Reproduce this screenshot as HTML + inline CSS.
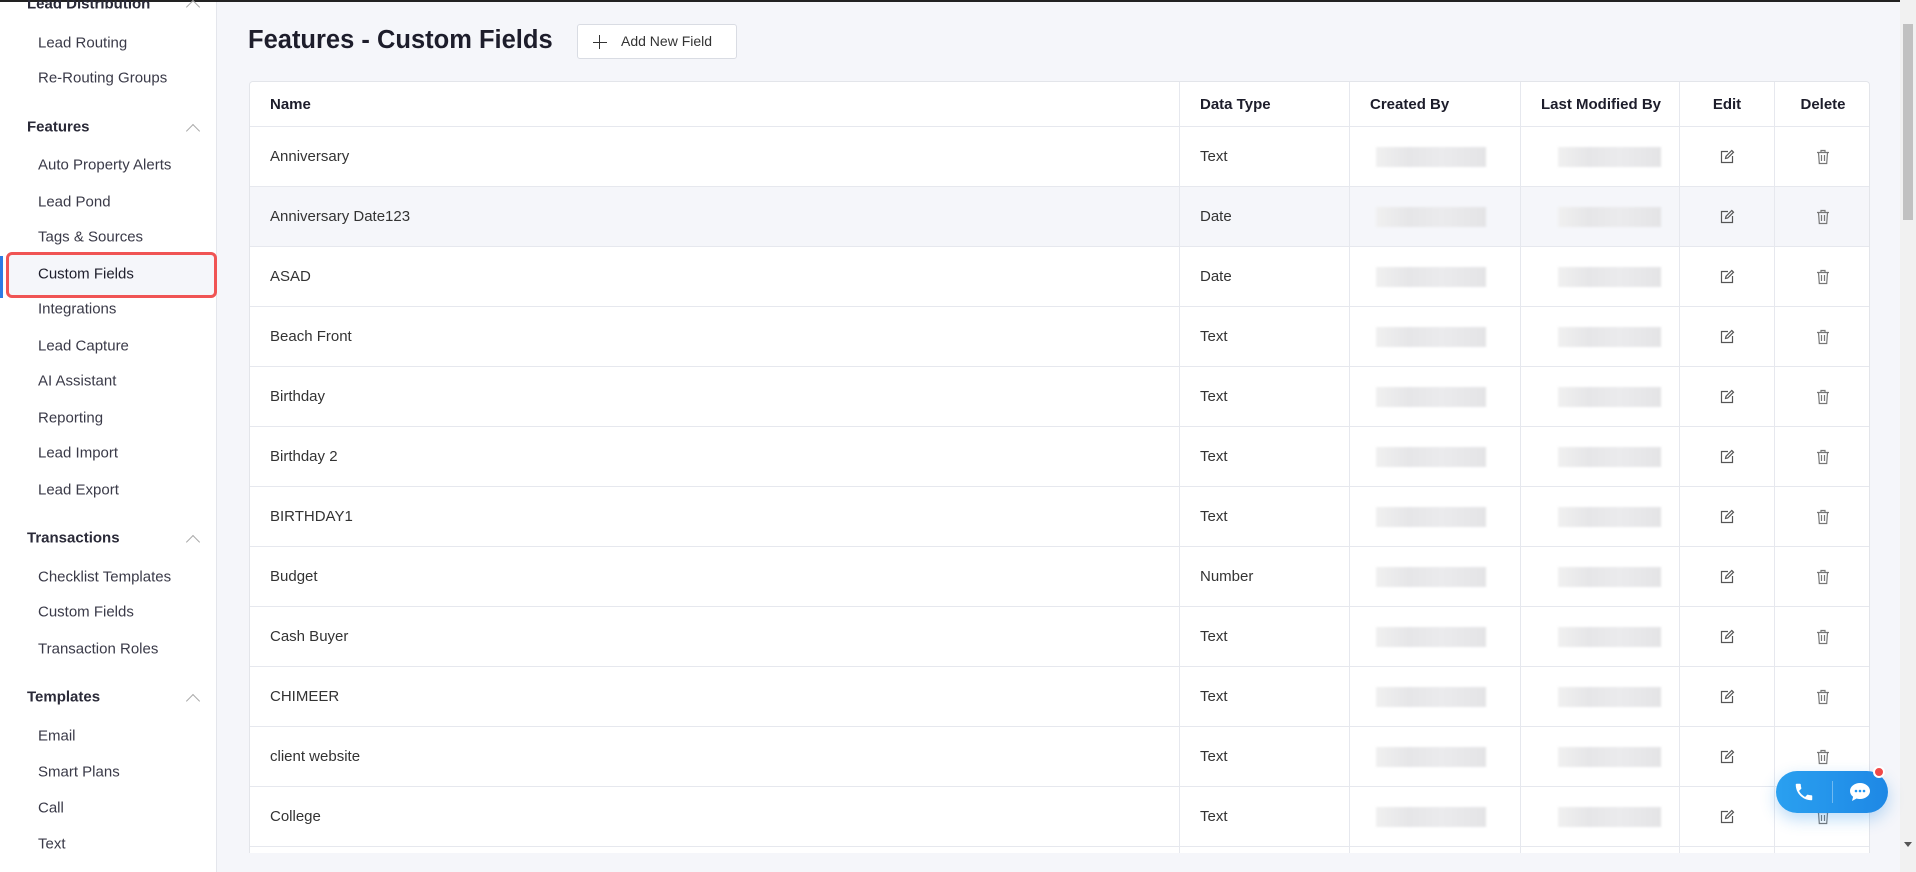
<!DOCTYPE html><html><head><style>
*{box-sizing:border-box;margin:0;padding:0}
body{width:1916px;height:872px;overflow:hidden;background:#f5f6fa;font-family:"Liberation Sans",sans-serif;position:relative;color:#333}
.top{position:absolute;left:0;top:0;width:1916px;height:2px;background:#222}
.side{position:absolute;left:0;top:2px;width:217px;height:870px;background:#fff;border-right:1px solid #e4e6ec}
.s{position:absolute;font-size:15px;color:#3a3a48;white-space:nowrap;transform:translateY(-50%)}
.h{left:27px;font-weight:bold;color:#2a2a38}
.i{left:38px}
.chev{position:absolute;left:188px;width:10px;height:10px;border-left:1.3px solid #aaa;border-top:1.3px solid #aaa;transform:rotate(45deg)}
.hl{position:absolute;left:6px;top:250px;width:211px;height:46px;border:3px solid #f05454;border-radius:6px;background:#f5f6fa}
.bar{position:absolute;left:0;top:254px;width:3px;height:42px;background:#2d7be5}
h1{position:absolute;left:248px;top:26px;font-size:25.5px;font-weight:bold;color:#1d1d2b}
.btn{position:absolute;left:577px;top:24px;width:160px;height:35px;background:#fff;border:1px solid #d9dce3;border-radius:3px;font-size:14px;color:#333;line-height:33px;padding-left:43px}
.btn:before{content:"";position:absolute;left:21px;top:10px;width:1.3px;height:14px;background:#333}
.btn:after{content:"";position:absolute;left:14.5px;top:16.5px;width:14px;height:1.3px;background:#333}
.tbl{position:absolute;left:249px;top:81px;width:1621px;height:772px;background:#fff;border:1px solid #e3e5ea;border-bottom:none;border-radius:4px 4px 0 0;overflow:hidden}
.row{position:absolute;left:0;width:1621px;height:60px;border-bottom:1px solid #e6e8ee}
.c{position:absolute;top:0;height:100%;border-right:1px solid #e6e8ee;font-size:15px;display:flex;align-items:center}
.hd .c{font-weight:bold;color:#1d1d2b;font-size:15px}
.blur{position:absolute;height:20px;background:linear-gradient(90deg,#f0f0f0,#e6e6e8 30%,#ebebed 60%,#e4e4e6);filter:blur(1px)}
.sb{position:absolute;left:1900px;top:0;width:16px;height:872px;background:#f1f1f1}
.th{position:absolute;left:1903px;top:24px;width:10px;height:196px;background:#c1c1c1}
.fab{position:absolute;left:1776px;top:771px;width:112px;height:42px;border-radius:21px;background:linear-gradient(90deg,#2aa0f0,#1e88e5);box-shadow:0 6px 16px rgba(30,136,229,.3)}
.dot{position:absolute;left:1873px;top:766px;width:12px;height:12px;border-radius:50%;background:#f04848;border:2px solid #fff}
</style></head><body>
<div class="top"></div>
<div class="side">
<div class="hl"></div><div class="bar"></div>
<div class="s h" style="top:2px">Lead Distribution</div><div class="chev" style="top:0px"></div>
<div class="s i" style="top:41px">Lead Routing</div>
<div class="s i" style="top:76px">Re-Routing Groups</div>
<div class="s h" style="top:125px">Features</div><div class="chev" style="top:124px"></div>
<div class="s i" style="top:163px">Auto Property Alerts</div>
<div class="s i" style="top:200px">Lead Pond</div>
<div class="s i" style="top:235px">Tags &amp; Sources</div>
<div class="s i" style="top:272px;color:#1d1d2b">Custom Fields</div>
<div class="s i" style="top:307px">Integrations</div>
<div class="s i" style="top:344px">Lead Capture</div>
<div class="s i" style="top:379px">AI Assistant</div>
<div class="s i" style="top:416px">Reporting</div>
<div class="s i" style="top:451px">Lead Import</div>
<div class="s i" style="top:488px">Lead Export</div>
<div class="s h" style="top:536px">Transactions</div><div class="chev" style="top:535px"></div>
<div class="s i" style="top:575px">Checklist Templates</div>
<div class="s i" style="top:610px">Custom Fields</div>
<div class="s i" style="top:647px">Transaction Roles</div>
<div class="s h" style="top:695px">Templates</div><div class="chev" style="top:694px"></div>
<div class="s i" style="top:734px">Email</div>
<div class="s i" style="top:770px">Smart Plans</div>
<div class="s i" style="top:806px">Call</div>
<div class="s i" style="top:842px">Text</div>
</div>
<h1>Features - Custom Fields</h1>
<div class="btn">Add New Field</div>
<div class="tbl" id="t"></div>
<div class="sb"></div><div class="th"></div>
<svg style="position:absolute;left:1904px;top:842px" width="8" height="6"><path d="M0 0h8L4 5z" fill="#555"/></svg>
<div class="fab">
<svg style="position:absolute;left:17px;top:10px" width="22" height="22" viewBox="0 0 24 24"><path d="M6.6 10.8c1.4 2.8 3.8 5.1 6.6 6.6l2.2-2.2c.3-.3.7-.4 1-.2 1.1.4 2.3.6 3.6.6.6 0 1 .4 1 1V20c0 .6-.4 1-1 1C10.6 21 3 13.4 3 4c0-.6.4-1 1-1h3.5c.6 0 1 .4 1 1 0 1.3.2 2.5.6 3.6.1.3 0 .7-.2 1z" fill="#fff"/></svg>
<div style="position:absolute;left:56px;top:10px;width:1px;height:22px;background:rgba(255,255,255,.35)"></div>
<svg style="position:absolute;left:72px;top:9px" width="24" height="24" viewBox="0 0 24 24"><path d="M12 3C6.5 3 2 6.6 2 11c0 2.3 1.2 4.3 3.1 5.8L4 21l4.6-2.5c1 .3 2.2.5 3.4.5 5.5 0 10-3.6 10-8s-4.5-8-10-8z" fill="#fff"/><circle cx="8" cy="11" r="1.3" fill="#2196f3"/><circle cx="12" cy="11" r="1.3" fill="#2196f3"/><circle cx="16" cy="11" r="1.3" fill="#2196f3"/></svg>
</div>
<div class="dot"></div>
<script>
var cols=[[0,930,'Name',20,'l'],[930,170,'Data Type',20,'l'],[1100,171,'Created By',20,'l'],[1271,159,'Last Modified By',20,'l'],[1430,95,'Edit',0,'c'],[1525,96,'Delete',0,'c']];
var rows=[['Anniversary','Text'],['Anniversary Date123','Date'],['ASAD','Date'],['Beach Front','Text'],['Birthday','Text'],['Birthday 2','Text'],['BIRTHDAY1','Text'],['Budget','Number'],['Cash Buyer','Text'],['CHIMEER','Text'],['client website','Text'],['College','Text'],['','']];
var edit='<svg width="16" height="16" viewBox="0 0 16 16" fill="none" stroke="#555" stroke-width="1.2"><path d="M9 2.5H2.5v11h11V7"/><path d="M6.5 9.5l.5-2.2L12.8 1.5l1.7 1.7L8.7 9z"/></svg>';
var del='<svg width="14" height="16" viewBox="0 0 14 16" fill="none" stroke="#777" stroke-width="1.2"><path d="M1 3.5h12M5 3.5V1.5h4v2M2.5 3.5l.8 11h7.4l.8-11M5.5 6v6M8.5 6v6"/></svg>';
var h='';
function row(top,cells,hd,bg){var s='<div class="row'+(hd?' hd':'')+'" style="top:'+top+'px;height:'+(hd?45:60)+'px;background:'+(bg||'#fff')+'">';
cols.forEach(function(c,i){s+='<div class="c" style="left:'+c[0]+'px;width:'+c[1]+'px;padding-left:'+c[3]+'px;justify-content:'+(c[4]=='c'?'center':'flex-start')+';'+(i==5?'border-right:none':'')+'">'+cells[i]+'</div>';});return s+'</div>';}
h+=row(0,cols.map(function(c){return c[2]}),1);
rows.forEach(function(r,k){var t=45+k*60;h+=row(t,[r[0],r[1],'','',edit,del],0,k==1?'#f5f6fa':'#fff');
h+='<div class="blur" style="left:1126px;width:110px;top:'+(t+20)+'px"></div><div class="blur" style="left:1308px;width:103px;top:'+(t+20)+'px"></div>';});
document.getElementById('t').innerHTML=h;
</script>
</body></html>
